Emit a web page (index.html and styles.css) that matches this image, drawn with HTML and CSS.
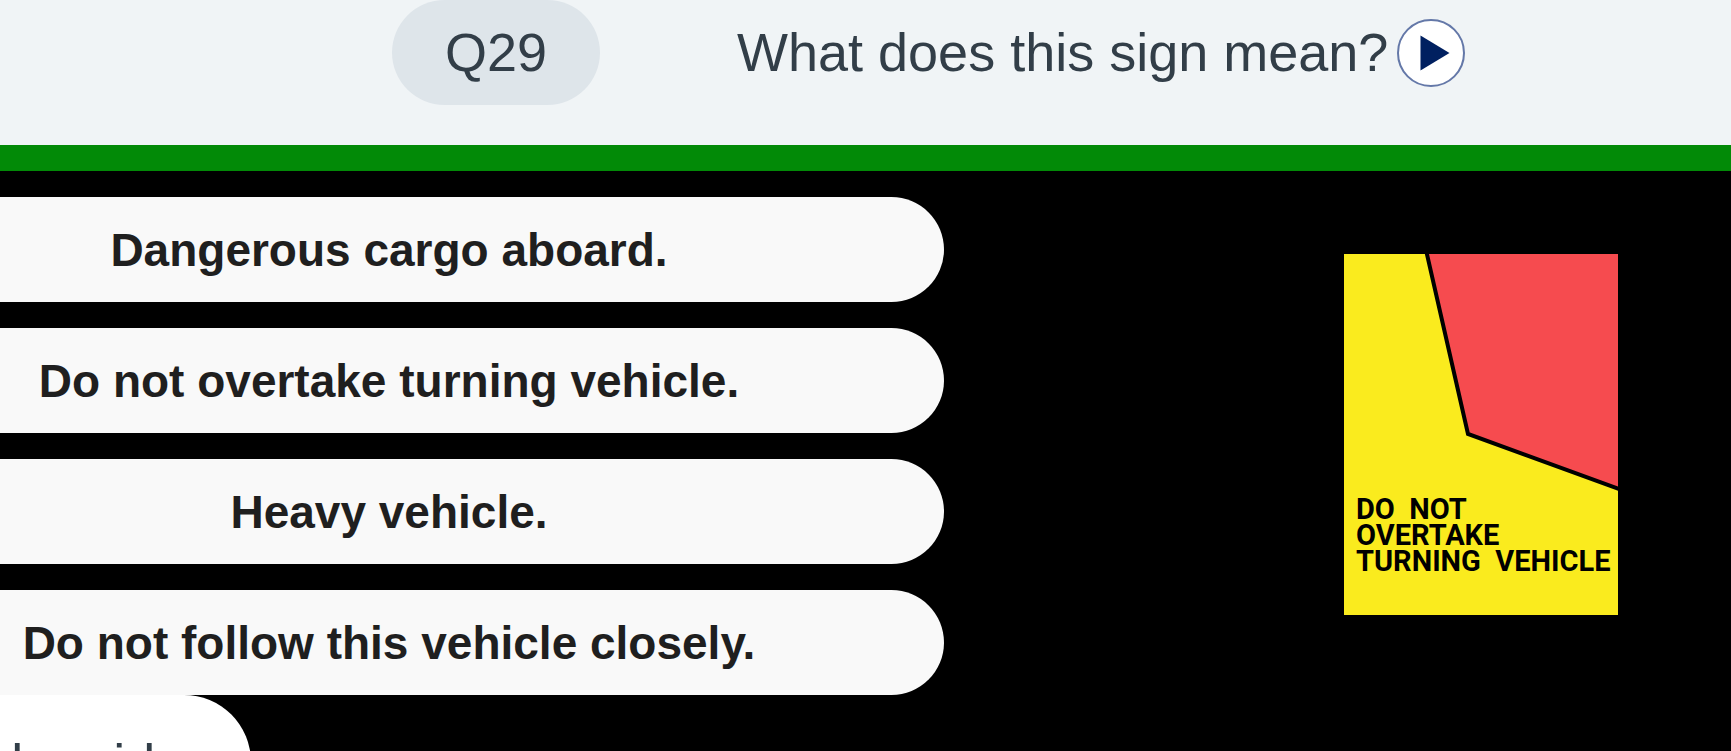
FILE: index.html
```
<!DOCTYPE html>
<html lang="en">
<head>
    <meta charset="utf-8">
    <title>Road Signs Quiz</title>
    <link rel="stylesheet" href="styles.css">
</head>
<body>
    <header class="question-bar">
        <span class="question-number">Q29</span>
        <h1 class="question-text">What does this sign mean?</h1>
        <button type="button" class="play-btn" aria-label="Play question">
            <svg viewBox="0 0 68 68" aria-hidden="true">
                <circle cx="34" cy="34" r="33" fill="#fff" stroke="#6478a8" stroke-width="2"/>
                <path d="M23.500 16.500 L52.500 34 L23.500 51.500 Z" fill="#002060"/>
            </svg>
        </button>
    </header>

    <main class="quiz">
        <div class="answers">
            <button type="button" class="answer">Dangerous cargo aboard.</button>
            <button type="button" class="answer">Do not overtake turning vehicle.</button>
            <button type="button" class="answer">Heavy vehicle.</button>
            <button type="button" class="answer">Do not follow this vehicle closely.</button>
        </div>
        <svg class="sign" viewBox="0 0 274 361" role="img" aria-label="Do not overtake turning vehicle sign">
            <rect width="274" height="361" fill="#faeb1e"/>
            <path d="M83 0 L124 180 L274 235 L274 0 Z" fill="#f64b4f"/>
            <path d="M82 -4 L124 180 L278 236" fill="none" stroke="#000" stroke-width="4"/>
            <text class="sign-text" x="12" y="265">DO&#160; NOT</text>
            <text class="sign-text" x="12" y="291">OVERTAKE</text>
            <text class="sign-text" x="12" y="317">TURNING&#160; VEHICLE</text>
        </svg>
    </main>

    <button type="button" class="guide-btn">Handbook guide</button>
</body>
</html>
```
FILE: styles.css
```
* { box-sizing: border-box; }

body {
    margin: 0;
    height: 100vh;
    overflow: hidden;
    background-color: #000;
    font-family: "Liberation Sans", Arial, sans-serif;
}

button {
    border: none;
    font-family: inherit;
    cursor: pointer;
}

.question-bar {
    display: flex;
    align-items: flex-start;
    height: 171px;
    padding-left: 392px;
    background-color: #f0f4f6;
    border-bottom: 26px solid #028a07;
    color: #323e48;
    font-size: 54px;
    line-height: 105px;
}
.question-number {
    width: 208px;
    border-radius: 53px;
    background-color: #dee5ea;
    text-align: center;
}
.question-text {
    margin: 0 9px 0 137px;
    font-size: 54px;
    font-weight: 400;
    white-space: nowrap;
}
.play-btn {
    width: 68px;
    height: 68px;
    margin-top: 19px;
    padding: 0;
    background: none;
}
.play-btn svg { display: block; }

/* the answer list runs off the left edge */
.quiz {
    display: flex;
    justify-content: space-between;
    align-items: flex-start;
    margin-left: -166px;
    padding: 26px 113px 0 0;
}
.answers {
    display: flex;
    flex-direction: column;
    gap: 26px;
    width: 1110px;
}
.answer {
    height: 105px;
    border-radius: 53px;
    background-color: #f9f9f9;
    color: #1f1f1f;
    font-size: 46px;
    font-weight: 700;
}
.sign {
    width: 274px;
    margin-top: 57px;
}
.sign-text {
    font-family: Roboto, sans-serif;
    font-size: 29px;
    font-weight: 700;
}

.guide-btn {
    display: block;
    height: 134px;
    margin-left: -274px;
    padding: 2px 66px 0;
    border-radius: 67px;
    background-color: #fff;
    color: #323e48;
    font-size: 54px;
}
```
